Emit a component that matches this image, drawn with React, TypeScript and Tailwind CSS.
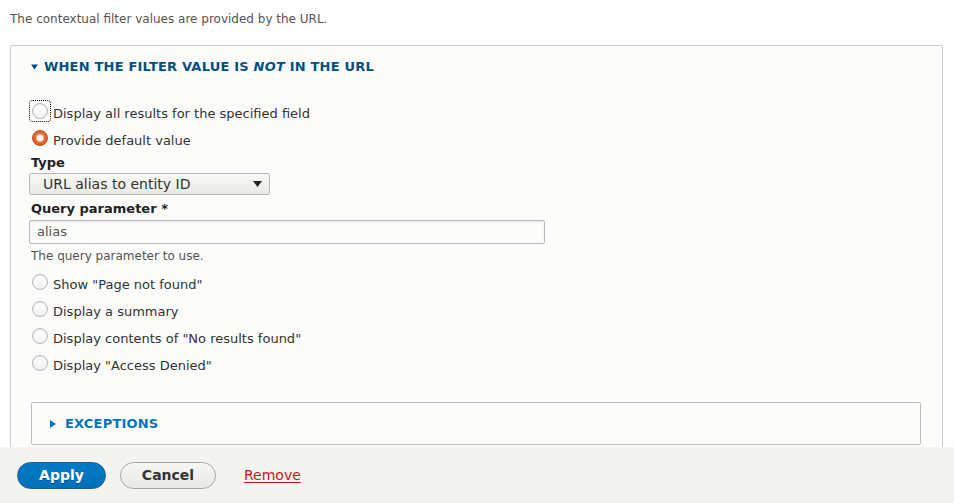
import React from "react";

const font = { fontFamily: '"DejaVu Sans", Verdana, sans-serif' };

function Radio({ checked, focused, label }: { checked?: boolean; focused?: boolean; label: string }) {
  return (
    <div className="flex items-start h-[20px]">
      <span
        className={
          "ml-[1px] mr-[5px] flex h-[16px] w-[16px] shrink-0 items-center justify-center " +
          (focused ? "outline-1 outline-dotted outline-black outline-offset-[2px] rounded-[1px]" : "")
        }
      >
        {checked ? (
          <span className="flex h-[16px] w-[16px] items-center justify-center rounded-full border border-[#b8481c] bg-[radial-gradient(circle_at_50%_40%,#f0784a,#d9561f)]">
            <span className="h-[6px] w-[6px] rounded-full bg-white shadow-[0_0_0_1px_rgba(255,220,200,0.6)]" />
          </span>
        ) : (
          <span className="h-[16px] w-[16px] rounded-full border border-[#b5b5b5] bg-[linear-gradient(#ffffff,#f1f1ef)] shadow-[inset_0_1px_1px_rgba(0,0,0,0.08)]" />
        )}
      </span>
      <span className="mt-[1px] text-[13px] leading-[20px] text-[#333]">{label}</span>
    </div>
  );
}

export default function App() {
  return (
    <div style={font} className="flex h-[503px] w-[954px] flex-col overflow-hidden bg-white text-[#333]">
      <div className="h-[447px] overflow-hidden px-[10px]">
        <p className="pt-[10px] text-[12px] leading-[18px] text-[#555]">
          The contextual filter values are provided by the URL.
        </p>
        <div className="mt-[17px] mr-[1px] rounded-[2px] border border-[#ccc] bg-[#fcfcfa] pl-[20px]">
          <div className="flex h-[20px] items-center mt-[11px] text-[13px] font-bold uppercase text-[#004f80]">
            <svg width="8" height="8" viewBox="0 0 8 8" className="mr-[5px]">
              <polygon points="0,1.5 7,1.5 3.5,6.5" fill="#004f80" />
            </svg>
            <span className="tracking-[0.2px]">
              When the filter value is <em>not</em> in the URL
            </span>
          </div>

          <div className="mt-[26px]">
            <Radio focused label="Display all results for the specified field" />
          </div>
          <div className="mt-[7px]">
            <Radio checked label="Provide default value" />
          </div>

          <div className="mt-[5px] text-[13px] font-bold leading-[16px] text-[#222]">Type</div>
          <div className="mt-[2px] ml-[-2px] flex h-[22px] w-[241px] items-center justify-between rounded-[2px] border border-[#b8b8b8] bg-[linear-gradient(#f8f8f6,#e9e9e4)] pl-[13px] pr-[7px]">
            <span className="text-[14px] leading-[16px] text-[#333]">URL alias to entity ID</span>
            <svg width="9" height="6" viewBox="0 0 9 6">
              <polygon points="0,0 9,0 4.5,6" fill="#222" />
            </svg>
          </div>

          <div className="mt-[6px] text-[13px] font-bold leading-[16px] text-[#222]">
            Query parameter <span className="font-bold">*</span>
          </div>
          <div className="mt-[3px] ml-[-2px] flex h-[24px] w-[516px] items-center rounded-[2px] border border-[#b8b8b8] bg-[#fcfcfa] pl-[7px] shadow-[inset_0_1px_2px_rgba(0,0,0,0.08)]">
            <span className="text-[13px] text-[#555]">alias</span>
          </div>
          <div className="mt-[4px] text-[12px] leading-[16px] text-[#555]">The query parameter to use.</div>

          <div className="mt-[10px]">
            <Radio label={'Show "Page not found"'} />
          </div>
          <div className="mt-[7px]">
            <Radio label="Display a summary" />
          </div>
          <div className="mt-[7px]">
            <Radio label={'Display contents of "No results found"'} />
          </div>
          <div className="mt-[7px]">
            <Radio label={'Display "Access Denied"'} />
          </div>

          <div className="mt-[27px] mr-[21px] flex h-[43px] items-center rounded-[2px] border border-[#bfbfbf] bg-[#fcfcfa] pl-[18px] pt-[1px] mb-[40px]">
            <svg width="6" height="8" viewBox="0 0 6 8" className="mr-[9px]">
              <polygon points="0,0 6,4 0,8" fill="#0074bd" />
            </svg>
            <span className="text-[13px] font-bold uppercase tracking-[0.2px] text-[#0074bd]">Exceptions</span>
          </div>
        </div>
      </div>
      <div className="flex h-[56px] items-center bg-[#f3f3f0] pl-[17px] pt-[1px]">
        <button className="h-[27px] w-[89px] rounded-full border border-[#1e5c90] bg-[linear-gradient(#007bc6,#0071b8)] text-[14px] font-bold text-white [text-shadow:0_1px_0_rgba(0,0,0,0.3)]">
          Apply
        </button>
        <button className="ml-[14px] h-[27px] w-[96px] rounded-full border border-[#a6a6a6] bg-[linear-gradient(#f6f6f3,#e8e8e4)] text-[14px] font-bold text-[#333]">
          Cancel
        </button>
        <a className="ml-[28px] text-[14px] text-[#c4161c] underline underline-offset-[2px]" href="#">
          Remove
        </a>
      </div>
    </div>
  );
}
